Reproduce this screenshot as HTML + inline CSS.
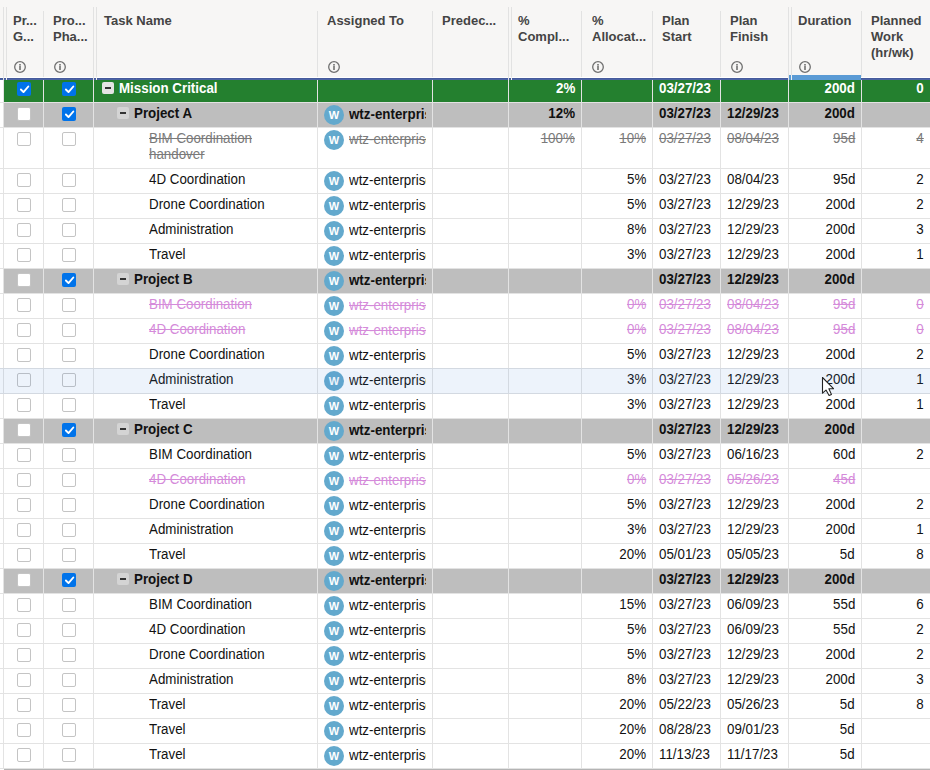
<!DOCTYPE html><html><head><meta charset="utf-8"><title>Sheet</title><style>

html,body{margin:0;padding:0;}
body{width:930px;height:770px;overflow:hidden;position:relative;background:#fff;font-family:"Liberation Sans",sans-serif;font-size:13.333px;color:#111;}
#hdr{position:absolute;left:0;top:0;width:930px;height:77px;background:#f7f6f5;border-bottom:1px solid #fff;}
.hl{position:absolute;width:1px;background:#e2e2e2;}
.ht{position:absolute;top:13px;font-weight:bold;font-size:13px;line-height:16px;color:#444;white-space:nowrap;}
.info{position:absolute;top:61px;width:12px;height:12px;}
#blue{position:absolute;left:0;top:78px;width:930px;height:1px;background:#465b9c;border-bottom:1px solid #4c64a4;}
#colsel{position:absolute;left:789px;top:75px;width:72px;height:5px;background:#5b9bd5;}
.row{position:absolute;left:4px;width:926px;}
.c{position:absolute;top:0;height:100%;box-sizing:border-box;overflow:hidden;white-space:nowrap;line-height:16px;padding-top:4px;font-size:14px;}
.r{text-align:right;padding-right:6px;}
.l{text-align:left;padding-left:6px;}
.vl{position:absolute;top:80px;width:1px;height:689px;background:#e3e3e3;}
.hln{position:absolute;left:0;width:930px;height:1px;background:#e3e3e3;}
.cb{position:absolute;width:14px;height:14px;box-sizing:border-box;border:1px solid #c6c6c6;border-radius:2px;background:#fff;}
.cb.on{border:none;background:#0073ea;}
.cb svg{position:absolute;left:0;top:0;}
.ex{position:absolute;width:12px;height:12px;border-radius:2px;background:#e0e0e0;}
.ex i{position:absolute;left:3px;top:5px;width:6px;height:2px;background:#333;}
.av{position:absolute;left:324px;width:20px;height:20px;border-radius:10px;background:#63a9cd;color:#fff;font-weight:bold;font-size:11px;line-height:20px;text-align:center;}
.as{position:absolute;left:349px;width:76px;overflow:hidden;white-space:nowrap;line-height:16px;font-size:14px;}
.sx{display:inline-block;transform:scaleX(0.9524);transform-origin:0 0;text-decoration:inherit;}
.r .sx{transform-origin:100% 0;}
.b{font-weight:bold;}
.s{text-decoration:line-through;}

</style></head><body>
<div id="hdr"></div>
<div class="hl" style="left:3px;top:7px;height:70px"></div>
<div class="hl" style="left:6px;top:7px;height:70px"></div>
<div class="hl" style="left:43px;top:11px;height:66px"></div>
<div class="hl" style="left:93px;top:7px;height:70px"></div>
<div class="hl" style="left:96px;top:7px;height:70px"></div>
<div class="hl" style="left:317px;top:11px;height:66px"></div>
<div class="hl" style="left:432px;top:11px;height:66px"></div>
<div class="hl" style="left:508px;top:7px;height:70px"></div>
<div class="hl" style="left:511px;top:7px;height:70px"></div>
<div class="hl" style="left:581px;top:11px;height:66px"></div>
<div class="hl" style="left:652px;top:11px;height:66px"></div>
<div class="hl" style="left:720px;top:11px;height:66px"></div>
<div class="hl" style="left:788px;top:7px;height:70px"></div>
<div class="hl" style="left:791px;top:7px;height:70px"></div>
<div class="hl" style="left:861px;top:11px;height:66px"></div>
<div class="ht" style="left:13px">Pr...<br>G...</div>
<svg class="info" style="left:14px" viewBox="0 0 12 12"><circle cx="6" cy="6" r="5.3" fill="none" stroke="#707070" stroke-width="1.3"/><rect x="5.2" y="3" width="1.6" height="1.5" fill="#707070"/><rect x="5.2" y="4.8" width="1.6" height="4.2" fill="#707070"/></svg>
<div class="ht" style="left:53px">Pro...<br>Pha...</div>
<svg class="info" style="left:54px" viewBox="0 0 12 12"><circle cx="6" cy="6" r="5.3" fill="none" stroke="#707070" stroke-width="1.3"/><rect x="5.2" y="3" width="1.6" height="1.5" fill="#707070"/><rect x="5.2" y="4.8" width="1.6" height="4.2" fill="#707070"/></svg>
<div class="ht" style="left:104px">Task Name</div>
<div class="ht" style="left:327px">Assigned To</div>
<svg class="info" style="left:328px" viewBox="0 0 12 12"><circle cx="6" cy="6" r="5.3" fill="none" stroke="#707070" stroke-width="1.3"/><rect x="5.2" y="3" width="1.6" height="1.5" fill="#707070"/><rect x="5.2" y="4.8" width="1.6" height="4.2" fill="#707070"/></svg>
<div class="ht" style="left:442px">Predec...</div>
<div class="ht" style="left:518px">%<br>Compl...</div>
<div class="ht" style="left:592px">%<br>Allocat...</div>
<svg class="info" style="left:592px" viewBox="0 0 12 12"><circle cx="6" cy="6" r="5.3" fill="none" stroke="#707070" stroke-width="1.3"/><rect x="5.2" y="3" width="1.6" height="1.5" fill="#707070"/><rect x="5.2" y="4.8" width="1.6" height="4.2" fill="#707070"/></svg>
<div class="ht" style="left:662px">Plan<br>Start</div>
<div class="ht" style="left:730px">Plan<br>Finish</div>
<svg class="info" style="left:731px" viewBox="0 0 12 12"><circle cx="6" cy="6" r="5.3" fill="none" stroke="#707070" stroke-width="1.3"/><rect x="5.2" y="3" width="1.6" height="1.5" fill="#707070"/><rect x="5.2" y="4.8" width="1.6" height="4.2" fill="#707070"/></svg>
<div class="ht" style="left:798px">Duration</div>
<svg class="info" style="left:799px" viewBox="0 0 12 12"><circle cx="6" cy="6" r="5.3" fill="none" stroke="#707070" stroke-width="1.3"/><rect x="5.2" y="3" width="1.6" height="1.5" fill="#707070"/><rect x="5.2" y="4.8" width="1.6" height="4.2" fill="#707070"/></svg>
<div class="ht" style="left:871px">Planned<br>Work<br>(hr/wk)</div>
<div id="blue"></div><div id="colsel"></div>
<div class="row b" style="top:80px;height:22px;background:#24802f;color:#fff">
</div>
<div class="row b" style="top:103px;height:24px;background:#bebebe;color:#111">
</div>
<div class="row s" style="top:128px;height:40px;background:#fff;color:#7a7a7a">
</div>
<div class="row" style="top:169px;height:24px;background:#fff;color:#111">
</div>
<div class="row" style="top:194px;height:24px;background:#fff;color:#111">
</div>
<div class="row" style="top:219px;height:24px;background:#fff;color:#111">
</div>
<div class="row" style="top:244px;height:24px;background:#fff;color:#111">
</div>
<div class="row b" style="top:269px;height:24px;background:#bebebe;color:#111">
</div>
<div class="row s" style="top:294px;height:24px;background:#fff;color:#d58bda">
</div>
<div class="row s" style="top:319px;height:24px;background:#fff;color:#d58bda">
</div>
<div class="row" style="top:344px;height:24px;background:#fff;color:#111">
</div>
<div class="row" style="top:369px;height:24px;background:#fff;color:#111">
</div>
<div class="row" style="top:394px;height:24px;background:#fff;color:#111">
</div>
<div class="row b" style="top:419px;height:24px;background:#bebebe;color:#111">
</div>
<div class="row" style="top:444px;height:24px;background:#fff;color:#111">
</div>
<div class="row s" style="top:469px;height:24px;background:#fff;color:#d58bda">
</div>
<div class="row" style="top:494px;height:24px;background:#fff;color:#111">
</div>
<div class="row" style="top:519px;height:24px;background:#fff;color:#111">
</div>
<div class="row" style="top:544px;height:24px;background:#fff;color:#111">
</div>
<div class="row b" style="top:569px;height:24px;background:#bebebe;color:#111">
</div>
<div class="row" style="top:594px;height:24px;background:#fff;color:#111">
</div>
<div class="row" style="top:619px;height:24px;background:#fff;color:#111">
</div>
<div class="row" style="top:644px;height:24px;background:#fff;color:#111">
</div>
<div class="row" style="top:669px;height:24px;background:#fff;color:#111">
</div>
<div class="row" style="top:694px;height:24px;background:#fff;color:#111">
</div>
<div class="row" style="top:719px;height:24px;background:#fff;color:#111">
</div>
<div class="row" style="top:744px;height:24px;background:#fff;color:#111">
</div>
<div class="cb on" style="left:17px;top:82px"><svg width="14" height="14" viewBox="0 0 14 14"><path d="M3.9 7.5 L6.5 10.1 L11.3 4.5" fill="none" stroke="#fff" stroke-width="1.9" stroke-linecap="round" stroke-linejoin="round"/></svg></div>
<div class="cb on" style="left:62px;top:82px"><svg width="14" height="14" viewBox="0 0 14 14"><path d="M3.9 7.5 L6.5 10.1 L11.3 4.5" fill="none" stroke="#fff" stroke-width="1.9" stroke-linecap="round" stroke-linejoin="round"/></svg></div>
<div class="ex" style="left:102px;top:82px;background:#e4e4e4"><i></i></div>
<div class="c  b" style="left:119px;width:198px;top:80px;height:22px;color:#fff;padding-top:0px;"><span class="sx">Mission Critical</span></div>
<div class="c r b" style="left:509px;width:72px;top:80px;height:22px;color:#fff;padding-top:0px;"><span class="sx">2%</span></div>
<div class="c r b" style="left:582px;width:70px;top:80px;height:22px;color:#fff;padding-top:0px;"><span class="sx"></span></div>
<div class="c l b" style="left:653px;width:67px;top:80px;height:22px;color:#fff;padding-top:0px;"><span class="sx">03/27/23</span></div>
<div class="c l b" style="left:721px;width:67px;top:80px;height:22px;color:#fff;padding-top:0px;"><span class="sx"></span></div>
<div class="c r b" style="left:789px;width:72px;top:80px;height:22px;color:#fff;padding-top:0px;"><span class="sx">200d</span></div>
<div class="c r b" style="left:862px;width:68px;top:80px;height:22px;color:#fff;padding-top:0px;"><span class="sx">0</span></div>
<div class="cb" style="left:17px;top:107px;border-color:#c4c4c4"></div>
<div class="cb on" style="left:62px;top:107px"><svg width="14" height="14" viewBox="0 0 14 14"><path d="M3.9 7.5 L6.5 10.1 L11.3 4.5" fill="none" stroke="#fff" stroke-width="1.9" stroke-linecap="round" stroke-linejoin="round"/></svg></div>
<div class="ex" style="left:117px;top:107px;background:#d4d4d4"><i></i></div>
<div class="c  b" style="left:134px;width:183px;top:103px;height:24px;color:#111;padding-top:2px;"><span class="sx">Project A</span></div>
<div class="av" style="top:105px">W</div>
<div class="as b" style="top:106px;color:#111;width:77px"><span class="sx">wtz-enterprise</span></div>
<div class="c r b" style="left:509px;width:72px;top:103px;height:24px;color:#111;padding-top:2px;"><span class="sx">12%</span></div>
<div class="c r b" style="left:582px;width:70px;top:103px;height:24px;color:#111;padding-top:2px;"><span class="sx"></span></div>
<div class="c l b" style="left:653px;width:67px;top:103px;height:24px;color:#111;padding-top:2px;"><span class="sx">03/27/23</span></div>
<div class="c l b" style="left:721px;width:67px;top:103px;height:24px;color:#111;padding-top:2px;"><span class="sx">12/29/23</span></div>
<div class="c r b" style="left:789px;width:72px;top:103px;height:24px;color:#111;padding-top:2px;"><span class="sx">200d</span></div>
<div class="c r b" style="left:862px;width:68px;top:103px;height:24px;color:#111;padding-top:2px;"><span class="sx"></span></div>
<div class="cb" style="left:17px;top:132px;border-color:#c4c4c4"></div>
<div class="cb" style="left:62px;top:132px;border-color:#c4c4c4"></div>
<div class="c  s" style="left:149px;width:168px;top:128px;height:40px;color:#7a7a7a;padding-top:2px;"><span class="sx">BIM Coordination<br>handover</span></div>
<div class="av" style="top:130px">W</div>
<div class="as s" style="top:131px;color:#7a7a7a;width:77px"><span class="sx">wtz-enterprise</span></div>
<div class="c r s" style="left:509px;width:72px;top:128px;height:40px;color:#7a7a7a;padding-top:2px;"><span class="sx">100%</span></div>
<div class="c r s" style="left:582px;width:70px;top:128px;height:40px;color:#7a7a7a;padding-top:2px;"><span class="sx">10%</span></div>
<div class="c l s" style="left:653px;width:67px;top:128px;height:40px;color:#7a7a7a;padding-top:2px;"><span class="sx">03/27/23</span></div>
<div class="c l s" style="left:721px;width:67px;top:128px;height:40px;color:#7a7a7a;padding-top:2px;"><span class="sx">08/04/23</span></div>
<div class="c r s" style="left:789px;width:72px;top:128px;height:40px;color:#7a7a7a;padding-top:2px;"><span class="sx">95d</span></div>
<div class="c r s" style="left:862px;width:68px;top:128px;height:40px;color:#7a7a7a;padding-top:2px;"><span class="sx">4</span></div>
<div class="cb" style="left:17px;top:173px;border-color:#c4c4c4"></div>
<div class="cb" style="left:62px;top:173px;border-color:#c4c4c4"></div>
<div class="c " style="left:149px;width:168px;top:169px;height:24px;color:#111;padding-top:2px;"><span class="sx">4D Coordination</span></div>
<div class="av" style="top:171px">W</div>
<div class="as" style="top:172px;color:#111;width:77px"><span class="sx">wtz-enterprise</span></div>
<div class="c r" style="left:509px;width:72px;top:169px;height:24px;color:#111;padding-top:2px;"><span class="sx"></span></div>
<div class="c r" style="left:582px;width:70px;top:169px;height:24px;color:#111;padding-top:2px;"><span class="sx">5%</span></div>
<div class="c l" style="left:653px;width:67px;top:169px;height:24px;color:#111;padding-top:2px;"><span class="sx">03/27/23</span></div>
<div class="c l" style="left:721px;width:67px;top:169px;height:24px;color:#111;padding-top:2px;"><span class="sx">08/04/23</span></div>
<div class="c r" style="left:789px;width:72px;top:169px;height:24px;color:#111;padding-top:2px;"><span class="sx">95d</span></div>
<div class="c r" style="left:862px;width:68px;top:169px;height:24px;color:#111;padding-top:2px;"><span class="sx">2</span></div>
<div class="cb" style="left:17px;top:198px;border-color:#c4c4c4"></div>
<div class="cb" style="left:62px;top:198px;border-color:#c4c4c4"></div>
<div class="c " style="left:149px;width:168px;top:194px;height:24px;color:#111;padding-top:2px;"><span class="sx">Drone Coordination</span></div>
<div class="av" style="top:196px">W</div>
<div class="as" style="top:197px;color:#111;width:77px"><span class="sx">wtz-enterprise</span></div>
<div class="c r" style="left:509px;width:72px;top:194px;height:24px;color:#111;padding-top:2px;"><span class="sx"></span></div>
<div class="c r" style="left:582px;width:70px;top:194px;height:24px;color:#111;padding-top:2px;"><span class="sx">5%</span></div>
<div class="c l" style="left:653px;width:67px;top:194px;height:24px;color:#111;padding-top:2px;"><span class="sx">03/27/23</span></div>
<div class="c l" style="left:721px;width:67px;top:194px;height:24px;color:#111;padding-top:2px;"><span class="sx">12/29/23</span></div>
<div class="c r" style="left:789px;width:72px;top:194px;height:24px;color:#111;padding-top:2px;"><span class="sx">200d</span></div>
<div class="c r" style="left:862px;width:68px;top:194px;height:24px;color:#111;padding-top:2px;"><span class="sx">2</span></div>
<div class="cb" style="left:17px;top:223px;border-color:#c4c4c4"></div>
<div class="cb" style="left:62px;top:223px;border-color:#c4c4c4"></div>
<div class="c " style="left:149px;width:168px;top:219px;height:24px;color:#111;padding-top:2px;"><span class="sx">Administration</span></div>
<div class="av" style="top:221px">W</div>
<div class="as" style="top:222px;color:#111;width:77px"><span class="sx">wtz-enterprise</span></div>
<div class="c r" style="left:509px;width:72px;top:219px;height:24px;color:#111;padding-top:2px;"><span class="sx"></span></div>
<div class="c r" style="left:582px;width:70px;top:219px;height:24px;color:#111;padding-top:2px;"><span class="sx">8%</span></div>
<div class="c l" style="left:653px;width:67px;top:219px;height:24px;color:#111;padding-top:2px;"><span class="sx">03/27/23</span></div>
<div class="c l" style="left:721px;width:67px;top:219px;height:24px;color:#111;padding-top:2px;"><span class="sx">12/29/23</span></div>
<div class="c r" style="left:789px;width:72px;top:219px;height:24px;color:#111;padding-top:2px;"><span class="sx">200d</span></div>
<div class="c r" style="left:862px;width:68px;top:219px;height:24px;color:#111;padding-top:2px;"><span class="sx">3</span></div>
<div class="cb" style="left:17px;top:248px;border-color:#c4c4c4"></div>
<div class="cb" style="left:62px;top:248px;border-color:#c4c4c4"></div>
<div class="c " style="left:149px;width:168px;top:244px;height:24px;color:#111;padding-top:2px;"><span class="sx">Travel</span></div>
<div class="av" style="top:246px">W</div>
<div class="as" style="top:247px;color:#111;width:77px"><span class="sx">wtz-enterprise</span></div>
<div class="c r" style="left:509px;width:72px;top:244px;height:24px;color:#111;padding-top:2px;"><span class="sx"></span></div>
<div class="c r" style="left:582px;width:70px;top:244px;height:24px;color:#111;padding-top:2px;"><span class="sx">3%</span></div>
<div class="c l" style="left:653px;width:67px;top:244px;height:24px;color:#111;padding-top:2px;"><span class="sx">03/27/23</span></div>
<div class="c l" style="left:721px;width:67px;top:244px;height:24px;color:#111;padding-top:2px;"><span class="sx">12/29/23</span></div>
<div class="c r" style="left:789px;width:72px;top:244px;height:24px;color:#111;padding-top:2px;"><span class="sx">200d</span></div>
<div class="c r" style="left:862px;width:68px;top:244px;height:24px;color:#111;padding-top:2px;"><span class="sx">1</span></div>
<div class="cb" style="left:17px;top:273px;border-color:#c4c4c4"></div>
<div class="cb on" style="left:62px;top:273px"><svg width="14" height="14" viewBox="0 0 14 14"><path d="M3.9 7.5 L6.5 10.1 L11.3 4.5" fill="none" stroke="#fff" stroke-width="1.9" stroke-linecap="round" stroke-linejoin="round"/></svg></div>
<div class="ex" style="left:117px;top:273px;background:#d4d4d4"><i></i></div>
<div class="c  b" style="left:134px;width:183px;top:269px;height:24px;color:#111;padding-top:2px;"><span class="sx">Project B</span></div>
<div class="av" style="top:271px">W</div>
<div class="as b" style="top:272px;color:#111;width:77px"><span class="sx">wtz-enterprise</span></div>
<div class="c r b" style="left:509px;width:72px;top:269px;height:24px;color:#111;padding-top:2px;"><span class="sx"></span></div>
<div class="c r b" style="left:582px;width:70px;top:269px;height:24px;color:#111;padding-top:2px;"><span class="sx"></span></div>
<div class="c l b" style="left:653px;width:67px;top:269px;height:24px;color:#111;padding-top:2px;"><span class="sx">03/27/23</span></div>
<div class="c l b" style="left:721px;width:67px;top:269px;height:24px;color:#111;padding-top:2px;"><span class="sx">12/29/23</span></div>
<div class="c r b" style="left:789px;width:72px;top:269px;height:24px;color:#111;padding-top:2px;"><span class="sx">200d</span></div>
<div class="c r b" style="left:862px;width:68px;top:269px;height:24px;color:#111;padding-top:2px;"><span class="sx"></span></div>
<div class="cb" style="left:17px;top:298px;border-color:#c4c4c4"></div>
<div class="cb" style="left:62px;top:298px;border-color:#c4c4c4"></div>
<div class="c  s" style="left:149px;width:168px;top:294px;height:24px;color:#d58bda;padding-top:2px;"><span class="sx">BIM Coordination</span></div>
<div class="av" style="top:296px">W</div>
<div class="as s" style="top:297px;color:#d58bda;width:77px"><span class="sx">wtz-enterprise</span></div>
<div class="c r s" style="left:509px;width:72px;top:294px;height:24px;color:#d58bda;padding-top:2px;"><span class="sx"></span></div>
<div class="c r s" style="left:582px;width:70px;top:294px;height:24px;color:#d58bda;padding-top:2px;"><span class="sx">0%</span></div>
<div class="c l s" style="left:653px;width:67px;top:294px;height:24px;color:#d58bda;padding-top:2px;"><span class="sx">03/27/23</span></div>
<div class="c l s" style="left:721px;width:67px;top:294px;height:24px;color:#d58bda;padding-top:2px;"><span class="sx">08/04/23</span></div>
<div class="c r s" style="left:789px;width:72px;top:294px;height:24px;color:#d58bda;padding-top:2px;"><span class="sx">95d</span></div>
<div class="c r s" style="left:862px;width:68px;top:294px;height:24px;color:#d58bda;padding-top:2px;"><span class="sx">0</span></div>
<div class="cb" style="left:17px;top:323px;border-color:#c4c4c4"></div>
<div class="cb" style="left:62px;top:323px;border-color:#c4c4c4"></div>
<div class="c  s" style="left:149px;width:168px;top:319px;height:24px;color:#d58bda;padding-top:2px;"><span class="sx">4D Coordination</span></div>
<div class="av" style="top:321px">W</div>
<div class="as s" style="top:322px;color:#d58bda;width:77px"><span class="sx">wtz-enterprise</span></div>
<div class="c r s" style="left:509px;width:72px;top:319px;height:24px;color:#d58bda;padding-top:2px;"><span class="sx"></span></div>
<div class="c r s" style="left:582px;width:70px;top:319px;height:24px;color:#d58bda;padding-top:2px;"><span class="sx">0%</span></div>
<div class="c l s" style="left:653px;width:67px;top:319px;height:24px;color:#d58bda;padding-top:2px;"><span class="sx">03/27/23</span></div>
<div class="c l s" style="left:721px;width:67px;top:319px;height:24px;color:#d58bda;padding-top:2px;"><span class="sx">08/04/23</span></div>
<div class="c r s" style="left:789px;width:72px;top:319px;height:24px;color:#d58bda;padding-top:2px;"><span class="sx">95d</span></div>
<div class="c r s" style="left:862px;width:68px;top:319px;height:24px;color:#d58bda;padding-top:2px;"><span class="sx">0</span></div>
<div class="cb" style="left:17px;top:348px;border-color:#c4c4c4"></div>
<div class="cb" style="left:62px;top:348px;border-color:#c4c4c4"></div>
<div class="c " style="left:149px;width:168px;top:344px;height:24px;color:#111;padding-top:2px;"><span class="sx">Drone Coordination</span></div>
<div class="av" style="top:346px">W</div>
<div class="as" style="top:347px;color:#111;width:77px"><span class="sx">wtz-enterprise</span></div>
<div class="c r" style="left:509px;width:72px;top:344px;height:24px;color:#111;padding-top:2px;"><span class="sx"></span></div>
<div class="c r" style="left:582px;width:70px;top:344px;height:24px;color:#111;padding-top:2px;"><span class="sx">5%</span></div>
<div class="c l" style="left:653px;width:67px;top:344px;height:24px;color:#111;padding-top:2px;"><span class="sx">03/27/23</span></div>
<div class="c l" style="left:721px;width:67px;top:344px;height:24px;color:#111;padding-top:2px;"><span class="sx">12/29/23</span></div>
<div class="c r" style="left:789px;width:72px;top:344px;height:24px;color:#111;padding-top:2px;"><span class="sx">200d</span></div>
<div class="c r" style="left:862px;width:68px;top:344px;height:24px;color:#111;padding-top:2px;"><span class="sx">2</span></div>
<div class="cb" style="left:17px;top:373px;border-color:#c4c4c4"></div>
<div class="cb" style="left:62px;top:373px;border-color:#c4c4c4"></div>
<div class="c " style="left:149px;width:168px;top:369px;height:24px;color:#111;padding-top:2px;"><span class="sx">Administration</span></div>
<div class="av" style="top:371px">W</div>
<div class="as" style="top:372px;color:#111;width:77px"><span class="sx">wtz-enterprise</span></div>
<div class="c r" style="left:509px;width:72px;top:369px;height:24px;color:#111;padding-top:2px;"><span class="sx"></span></div>
<div class="c r" style="left:582px;width:70px;top:369px;height:24px;color:#111;padding-top:2px;"><span class="sx">3%</span></div>
<div class="c l" style="left:653px;width:67px;top:369px;height:24px;color:#111;padding-top:2px;"><span class="sx">03/27/23</span></div>
<div class="c l" style="left:721px;width:67px;top:369px;height:24px;color:#111;padding-top:2px;"><span class="sx">12/29/23</span></div>
<div class="c r" style="left:789px;width:72px;top:369px;height:24px;color:#111;padding-top:2px;"><span class="sx">200d</span></div>
<div class="c r" style="left:862px;width:68px;top:369px;height:24px;color:#111;padding-top:2px;"><span class="sx">1</span></div>
<div class="cb" style="left:17px;top:398px;border-color:#c4c4c4"></div>
<div class="cb" style="left:62px;top:398px;border-color:#c4c4c4"></div>
<div class="c " style="left:149px;width:168px;top:394px;height:24px;color:#111;padding-top:2px;"><span class="sx">Travel</span></div>
<div class="av" style="top:396px">W</div>
<div class="as" style="top:397px;color:#111;width:77px"><span class="sx">wtz-enterprise</span></div>
<div class="c r" style="left:509px;width:72px;top:394px;height:24px;color:#111;padding-top:2px;"><span class="sx"></span></div>
<div class="c r" style="left:582px;width:70px;top:394px;height:24px;color:#111;padding-top:2px;"><span class="sx">3%</span></div>
<div class="c l" style="left:653px;width:67px;top:394px;height:24px;color:#111;padding-top:2px;"><span class="sx">03/27/23</span></div>
<div class="c l" style="left:721px;width:67px;top:394px;height:24px;color:#111;padding-top:2px;"><span class="sx">12/29/23</span></div>
<div class="c r" style="left:789px;width:72px;top:394px;height:24px;color:#111;padding-top:2px;"><span class="sx">200d</span></div>
<div class="c r" style="left:862px;width:68px;top:394px;height:24px;color:#111;padding-top:2px;"><span class="sx">1</span></div>
<div class="cb" style="left:17px;top:423px;border-color:#c4c4c4"></div>
<div class="cb on" style="left:62px;top:423px"><svg width="14" height="14" viewBox="0 0 14 14"><path d="M3.9 7.5 L6.5 10.1 L11.3 4.5" fill="none" stroke="#fff" stroke-width="1.9" stroke-linecap="round" stroke-linejoin="round"/></svg></div>
<div class="ex" style="left:117px;top:423px;background:#d4d4d4"><i></i></div>
<div class="c  b" style="left:134px;width:183px;top:419px;height:24px;color:#111;padding-top:2px;"><span class="sx">Project C</span></div>
<div class="av" style="top:421px">W</div>
<div class="as b" style="top:422px;color:#111;width:77px"><span class="sx">wtz-enterprise</span></div>
<div class="c r b" style="left:509px;width:72px;top:419px;height:24px;color:#111;padding-top:2px;"><span class="sx"></span></div>
<div class="c r b" style="left:582px;width:70px;top:419px;height:24px;color:#111;padding-top:2px;"><span class="sx"></span></div>
<div class="c l b" style="left:653px;width:67px;top:419px;height:24px;color:#111;padding-top:2px;"><span class="sx">03/27/23</span></div>
<div class="c l b" style="left:721px;width:67px;top:419px;height:24px;color:#111;padding-top:2px;"><span class="sx">12/29/23</span></div>
<div class="c r b" style="left:789px;width:72px;top:419px;height:24px;color:#111;padding-top:2px;"><span class="sx">200d</span></div>
<div class="c r b" style="left:862px;width:68px;top:419px;height:24px;color:#111;padding-top:2px;"><span class="sx"></span></div>
<div class="cb" style="left:17px;top:448px;border-color:#c4c4c4"></div>
<div class="cb" style="left:62px;top:448px;border-color:#c4c4c4"></div>
<div class="c " style="left:149px;width:168px;top:444px;height:24px;color:#111;padding-top:2px;"><span class="sx">BIM Coordination</span></div>
<div class="av" style="top:446px">W</div>
<div class="as" style="top:447px;color:#111;width:77px"><span class="sx">wtz-enterprise</span></div>
<div class="c r" style="left:509px;width:72px;top:444px;height:24px;color:#111;padding-top:2px;"><span class="sx"></span></div>
<div class="c r" style="left:582px;width:70px;top:444px;height:24px;color:#111;padding-top:2px;"><span class="sx">5%</span></div>
<div class="c l" style="left:653px;width:67px;top:444px;height:24px;color:#111;padding-top:2px;"><span class="sx">03/27/23</span></div>
<div class="c l" style="left:721px;width:67px;top:444px;height:24px;color:#111;padding-top:2px;"><span class="sx">06/16/23</span></div>
<div class="c r" style="left:789px;width:72px;top:444px;height:24px;color:#111;padding-top:2px;"><span class="sx">60d</span></div>
<div class="c r" style="left:862px;width:68px;top:444px;height:24px;color:#111;padding-top:2px;"><span class="sx">2</span></div>
<div class="cb" style="left:17px;top:473px;border-color:#c4c4c4"></div>
<div class="cb" style="left:62px;top:473px;border-color:#c4c4c4"></div>
<div class="c  s" style="left:149px;width:168px;top:469px;height:24px;color:#d58bda;padding-top:2px;"><span class="sx">4D Coordination</span></div>
<div class="av" style="top:471px">W</div>
<div class="as s" style="top:472px;color:#d58bda;width:77px"><span class="sx">wtz-enterprise</span></div>
<div class="c r s" style="left:509px;width:72px;top:469px;height:24px;color:#d58bda;padding-top:2px;"><span class="sx"></span></div>
<div class="c r s" style="left:582px;width:70px;top:469px;height:24px;color:#d58bda;padding-top:2px;"><span class="sx">0%</span></div>
<div class="c l s" style="left:653px;width:67px;top:469px;height:24px;color:#d58bda;padding-top:2px;"><span class="sx">03/27/23</span></div>
<div class="c l s" style="left:721px;width:67px;top:469px;height:24px;color:#d58bda;padding-top:2px;"><span class="sx">05/26/23</span></div>
<div class="c r s" style="left:789px;width:72px;top:469px;height:24px;color:#d58bda;padding-top:2px;"><span class="sx">45d</span></div>
<div class="c r s" style="left:862px;width:68px;top:469px;height:24px;color:#d58bda;padding-top:2px;"><span class="sx"></span></div>
<div class="cb" style="left:17px;top:498px;border-color:#c4c4c4"></div>
<div class="cb" style="left:62px;top:498px;border-color:#c4c4c4"></div>
<div class="c " style="left:149px;width:168px;top:494px;height:24px;color:#111;padding-top:2px;"><span class="sx">Drone Coordination</span></div>
<div class="av" style="top:496px">W</div>
<div class="as" style="top:497px;color:#111;width:77px"><span class="sx">wtz-enterprise</span></div>
<div class="c r" style="left:509px;width:72px;top:494px;height:24px;color:#111;padding-top:2px;"><span class="sx"></span></div>
<div class="c r" style="left:582px;width:70px;top:494px;height:24px;color:#111;padding-top:2px;"><span class="sx">5%</span></div>
<div class="c l" style="left:653px;width:67px;top:494px;height:24px;color:#111;padding-top:2px;"><span class="sx">03/27/23</span></div>
<div class="c l" style="left:721px;width:67px;top:494px;height:24px;color:#111;padding-top:2px;"><span class="sx">12/29/23</span></div>
<div class="c r" style="left:789px;width:72px;top:494px;height:24px;color:#111;padding-top:2px;"><span class="sx">200d</span></div>
<div class="c r" style="left:862px;width:68px;top:494px;height:24px;color:#111;padding-top:2px;"><span class="sx">2</span></div>
<div class="cb" style="left:17px;top:523px;border-color:#c4c4c4"></div>
<div class="cb" style="left:62px;top:523px;border-color:#c4c4c4"></div>
<div class="c " style="left:149px;width:168px;top:519px;height:24px;color:#111;padding-top:2px;"><span class="sx">Administration</span></div>
<div class="av" style="top:521px">W</div>
<div class="as" style="top:522px;color:#111;width:77px"><span class="sx">wtz-enterprise</span></div>
<div class="c r" style="left:509px;width:72px;top:519px;height:24px;color:#111;padding-top:2px;"><span class="sx"></span></div>
<div class="c r" style="left:582px;width:70px;top:519px;height:24px;color:#111;padding-top:2px;"><span class="sx">3%</span></div>
<div class="c l" style="left:653px;width:67px;top:519px;height:24px;color:#111;padding-top:2px;"><span class="sx">03/27/23</span></div>
<div class="c l" style="left:721px;width:67px;top:519px;height:24px;color:#111;padding-top:2px;"><span class="sx">12/29/23</span></div>
<div class="c r" style="left:789px;width:72px;top:519px;height:24px;color:#111;padding-top:2px;"><span class="sx">200d</span></div>
<div class="c r" style="left:862px;width:68px;top:519px;height:24px;color:#111;padding-top:2px;"><span class="sx">1</span></div>
<div class="cb" style="left:17px;top:548px;border-color:#c4c4c4"></div>
<div class="cb" style="left:62px;top:548px;border-color:#c4c4c4"></div>
<div class="c " style="left:149px;width:168px;top:544px;height:24px;color:#111;padding-top:2px;"><span class="sx">Travel</span></div>
<div class="av" style="top:546px">W</div>
<div class="as" style="top:547px;color:#111;width:77px"><span class="sx">wtz-enterprise</span></div>
<div class="c r" style="left:509px;width:72px;top:544px;height:24px;color:#111;padding-top:2px;"><span class="sx"></span></div>
<div class="c r" style="left:582px;width:70px;top:544px;height:24px;color:#111;padding-top:2px;"><span class="sx">20%</span></div>
<div class="c l" style="left:653px;width:67px;top:544px;height:24px;color:#111;padding-top:2px;"><span class="sx">05/01/23</span></div>
<div class="c l" style="left:721px;width:67px;top:544px;height:24px;color:#111;padding-top:2px;"><span class="sx">05/05/23</span></div>
<div class="c r" style="left:789px;width:72px;top:544px;height:24px;color:#111;padding-top:2px;"><span class="sx">5d</span></div>
<div class="c r" style="left:862px;width:68px;top:544px;height:24px;color:#111;padding-top:2px;"><span class="sx">8</span></div>
<div class="cb" style="left:17px;top:573px;border-color:#c4c4c4"></div>
<div class="cb on" style="left:62px;top:573px"><svg width="14" height="14" viewBox="0 0 14 14"><path d="M3.9 7.5 L6.5 10.1 L11.3 4.5" fill="none" stroke="#fff" stroke-width="1.9" stroke-linecap="round" stroke-linejoin="round"/></svg></div>
<div class="ex" style="left:117px;top:573px;background:#d4d4d4"><i></i></div>
<div class="c  b" style="left:134px;width:183px;top:569px;height:24px;color:#111;padding-top:2px;"><span class="sx">Project D</span></div>
<div class="av" style="top:571px">W</div>
<div class="as b" style="top:572px;color:#111;width:77px"><span class="sx">wtz-enterprise</span></div>
<div class="c r b" style="left:509px;width:72px;top:569px;height:24px;color:#111;padding-top:2px;"><span class="sx"></span></div>
<div class="c r b" style="left:582px;width:70px;top:569px;height:24px;color:#111;padding-top:2px;"><span class="sx"></span></div>
<div class="c l b" style="left:653px;width:67px;top:569px;height:24px;color:#111;padding-top:2px;"><span class="sx">03/27/23</span></div>
<div class="c l b" style="left:721px;width:67px;top:569px;height:24px;color:#111;padding-top:2px;"><span class="sx">12/29/23</span></div>
<div class="c r b" style="left:789px;width:72px;top:569px;height:24px;color:#111;padding-top:2px;"><span class="sx">200d</span></div>
<div class="c r b" style="left:862px;width:68px;top:569px;height:24px;color:#111;padding-top:2px;"><span class="sx"></span></div>
<div class="cb" style="left:17px;top:598px;border-color:#c4c4c4"></div>
<div class="cb" style="left:62px;top:598px;border-color:#c4c4c4"></div>
<div class="c " style="left:149px;width:168px;top:594px;height:24px;color:#111;padding-top:2px;"><span class="sx">BIM Coordination</span></div>
<div class="av" style="top:596px">W</div>
<div class="as" style="top:597px;color:#111;width:77px"><span class="sx">wtz-enterprise</span></div>
<div class="c r" style="left:509px;width:72px;top:594px;height:24px;color:#111;padding-top:2px;"><span class="sx"></span></div>
<div class="c r" style="left:582px;width:70px;top:594px;height:24px;color:#111;padding-top:2px;"><span class="sx">15%</span></div>
<div class="c l" style="left:653px;width:67px;top:594px;height:24px;color:#111;padding-top:2px;"><span class="sx">03/27/23</span></div>
<div class="c l" style="left:721px;width:67px;top:594px;height:24px;color:#111;padding-top:2px;"><span class="sx">06/09/23</span></div>
<div class="c r" style="left:789px;width:72px;top:594px;height:24px;color:#111;padding-top:2px;"><span class="sx">55d</span></div>
<div class="c r" style="left:862px;width:68px;top:594px;height:24px;color:#111;padding-top:2px;"><span class="sx">6</span></div>
<div class="cb" style="left:17px;top:623px;border-color:#c4c4c4"></div>
<div class="cb" style="left:62px;top:623px;border-color:#c4c4c4"></div>
<div class="c " style="left:149px;width:168px;top:619px;height:24px;color:#111;padding-top:2px;"><span class="sx">4D Coordination</span></div>
<div class="av" style="top:621px">W</div>
<div class="as" style="top:622px;color:#111;width:77px"><span class="sx">wtz-enterprise</span></div>
<div class="c r" style="left:509px;width:72px;top:619px;height:24px;color:#111;padding-top:2px;"><span class="sx"></span></div>
<div class="c r" style="left:582px;width:70px;top:619px;height:24px;color:#111;padding-top:2px;"><span class="sx">5%</span></div>
<div class="c l" style="left:653px;width:67px;top:619px;height:24px;color:#111;padding-top:2px;"><span class="sx">03/27/23</span></div>
<div class="c l" style="left:721px;width:67px;top:619px;height:24px;color:#111;padding-top:2px;"><span class="sx">06/09/23</span></div>
<div class="c r" style="left:789px;width:72px;top:619px;height:24px;color:#111;padding-top:2px;"><span class="sx">55d</span></div>
<div class="c r" style="left:862px;width:68px;top:619px;height:24px;color:#111;padding-top:2px;"><span class="sx">2</span></div>
<div class="cb" style="left:17px;top:648px;border-color:#c4c4c4"></div>
<div class="cb" style="left:62px;top:648px;border-color:#c4c4c4"></div>
<div class="c " style="left:149px;width:168px;top:644px;height:24px;color:#111;padding-top:2px;"><span class="sx">Drone Coordination</span></div>
<div class="av" style="top:646px">W</div>
<div class="as" style="top:647px;color:#111;width:77px"><span class="sx">wtz-enterprise</span></div>
<div class="c r" style="left:509px;width:72px;top:644px;height:24px;color:#111;padding-top:2px;"><span class="sx"></span></div>
<div class="c r" style="left:582px;width:70px;top:644px;height:24px;color:#111;padding-top:2px;"><span class="sx">5%</span></div>
<div class="c l" style="left:653px;width:67px;top:644px;height:24px;color:#111;padding-top:2px;"><span class="sx">03/27/23</span></div>
<div class="c l" style="left:721px;width:67px;top:644px;height:24px;color:#111;padding-top:2px;"><span class="sx">12/29/23</span></div>
<div class="c r" style="left:789px;width:72px;top:644px;height:24px;color:#111;padding-top:2px;"><span class="sx">200d</span></div>
<div class="c r" style="left:862px;width:68px;top:644px;height:24px;color:#111;padding-top:2px;"><span class="sx">2</span></div>
<div class="cb" style="left:17px;top:673px;border-color:#c4c4c4"></div>
<div class="cb" style="left:62px;top:673px;border-color:#c4c4c4"></div>
<div class="c " style="left:149px;width:168px;top:669px;height:24px;color:#111;padding-top:2px;"><span class="sx">Administration</span></div>
<div class="av" style="top:671px">W</div>
<div class="as" style="top:672px;color:#111;width:77px"><span class="sx">wtz-enterprise</span></div>
<div class="c r" style="left:509px;width:72px;top:669px;height:24px;color:#111;padding-top:2px;"><span class="sx"></span></div>
<div class="c r" style="left:582px;width:70px;top:669px;height:24px;color:#111;padding-top:2px;"><span class="sx">8%</span></div>
<div class="c l" style="left:653px;width:67px;top:669px;height:24px;color:#111;padding-top:2px;"><span class="sx">03/27/23</span></div>
<div class="c l" style="left:721px;width:67px;top:669px;height:24px;color:#111;padding-top:2px;"><span class="sx">12/29/23</span></div>
<div class="c r" style="left:789px;width:72px;top:669px;height:24px;color:#111;padding-top:2px;"><span class="sx">200d</span></div>
<div class="c r" style="left:862px;width:68px;top:669px;height:24px;color:#111;padding-top:2px;"><span class="sx">3</span></div>
<div class="cb" style="left:17px;top:698px;border-color:#c4c4c4"></div>
<div class="cb" style="left:62px;top:698px;border-color:#c4c4c4"></div>
<div class="c " style="left:149px;width:168px;top:694px;height:24px;color:#111;padding-top:2px;"><span class="sx">Travel</span></div>
<div class="av" style="top:696px">W</div>
<div class="as" style="top:697px;color:#111;width:77px"><span class="sx">wtz-enterprise</span></div>
<div class="c r" style="left:509px;width:72px;top:694px;height:24px;color:#111;padding-top:2px;"><span class="sx"></span></div>
<div class="c r" style="left:582px;width:70px;top:694px;height:24px;color:#111;padding-top:2px;"><span class="sx">20%</span></div>
<div class="c l" style="left:653px;width:67px;top:694px;height:24px;color:#111;padding-top:2px;"><span class="sx">05/22/23</span></div>
<div class="c l" style="left:721px;width:67px;top:694px;height:24px;color:#111;padding-top:2px;"><span class="sx">05/26/23</span></div>
<div class="c r" style="left:789px;width:72px;top:694px;height:24px;color:#111;padding-top:2px;"><span class="sx">5d</span></div>
<div class="c r" style="left:862px;width:68px;top:694px;height:24px;color:#111;padding-top:2px;"><span class="sx">8</span></div>
<div class="cb" style="left:17px;top:723px;border-color:#c4c4c4"></div>
<div class="cb" style="left:62px;top:723px;border-color:#c4c4c4"></div>
<div class="c " style="left:149px;width:168px;top:719px;height:24px;color:#111;padding-top:2px;"><span class="sx">Travel</span></div>
<div class="av" style="top:721px">W</div>
<div class="as" style="top:722px;color:#111;width:77px"><span class="sx">wtz-enterprise</span></div>
<div class="c r" style="left:509px;width:72px;top:719px;height:24px;color:#111;padding-top:2px;"><span class="sx"></span></div>
<div class="c r" style="left:582px;width:70px;top:719px;height:24px;color:#111;padding-top:2px;"><span class="sx">20%</span></div>
<div class="c l" style="left:653px;width:67px;top:719px;height:24px;color:#111;padding-top:2px;"><span class="sx">08/28/23</span></div>
<div class="c l" style="left:721px;width:67px;top:719px;height:24px;color:#111;padding-top:2px;"><span class="sx">09/01/23</span></div>
<div class="c r" style="left:789px;width:72px;top:719px;height:24px;color:#111;padding-top:2px;"><span class="sx">5d</span></div>
<div class="c r" style="left:862px;width:68px;top:719px;height:24px;color:#111;padding-top:2px;"><span class="sx"></span></div>
<div class="cb" style="left:17px;top:748px;border-color:#c4c4c4"></div>
<div class="cb" style="left:62px;top:748px;border-color:#c4c4c4"></div>
<div class="c " style="left:149px;width:168px;top:744px;height:24px;color:#111;padding-top:2px;"><span class="sx">Travel</span></div>
<div class="av" style="top:746px">W</div>
<div class="as" style="top:747px;color:#111;width:77px"><span class="sx">wtz-enterprise</span></div>
<div class="c r" style="left:509px;width:72px;top:744px;height:24px;color:#111;padding-top:2px;"><span class="sx"></span></div>
<div class="c r" style="left:582px;width:70px;top:744px;height:24px;color:#111;padding-top:2px;"><span class="sx">20%</span></div>
<div class="c l" style="left:653px;width:67px;top:744px;height:24px;color:#111;padding-top:2px;"><span class="sx">11/13/23</span></div>
<div class="c l" style="left:721px;width:67px;top:744px;height:24px;color:#111;padding-top:2px;"><span class="sx">11/17/23</span></div>
<div class="c r" style="left:789px;width:72px;top:744px;height:24px;color:#111;padding-top:2px;"><span class="sx">5d</span></div>
<div class="c r" style="left:862px;width:68px;top:744px;height:24px;color:#111;padding-top:2px;"><span class="sx"></span></div>
<div class="hln" style="top:102px"></div>
<div class="hln" style="top:127px"></div>
<div class="hln" style="top:168px"></div>
<div class="hln" style="top:193px"></div>
<div class="hln" style="top:218px"></div>
<div class="hln" style="top:243px"></div>
<div class="hln" style="top:268px"></div>
<div class="hln" style="top:293px"></div>
<div class="hln" style="top:318px"></div>
<div class="hln" style="top:343px"></div>
<div class="hln" style="top:368px"></div>
<div class="hln" style="top:393px"></div>
<div class="hln" style="top:418px"></div>
<div class="hln" style="top:443px"></div>
<div class="hln" style="top:468px"></div>
<div class="hln" style="top:493px"></div>
<div class="hln" style="top:518px"></div>
<div class="hln" style="top:543px"></div>
<div class="hln" style="top:568px"></div>
<div class="hln" style="top:593px"></div>
<div class="hln" style="top:618px"></div>
<div class="hln" style="top:643px"></div>
<div class="hln" style="top:668px"></div>
<div class="hln" style="top:693px"></div>
<div class="hln" style="top:718px"></div>
<div class="hln" style="top:743px"></div>
<div class="hln" style="top:768px"></div>
<div class="hln" style="top:769px;left:4px;width:926px;background:#b4b4b4"></div>
<div class="vl" style="left:3px;top:77px;height:692px"></div>
<div class="vl" style="left:6px;top:77px;height:3px;background:#f2f2f2"></div>
<div class="vl" style="left:43px"></div>
<div class="vl" style="left:93px;top:77px;height:692px"></div>
<div class="vl" style="left:96px;top:77px;height:3px;background:#f2f2f2"></div>
<div class="vl" style="left:317px"></div>
<div class="vl" style="left:432px"></div>
<div class="vl" style="left:508px;top:77px;height:692px"></div>
<div class="vl" style="left:511px;top:77px;height:3px;background:#f2f2f2"></div>
<div class="vl" style="left:581px"></div>
<div class="vl" style="left:652px"></div>
<div class="vl" style="left:720px"></div>
<div class="vl" style="left:788px;top:77px;height:692px"></div>
<div class="vl" style="left:791px;top:77px;height:3px;background:#f2f2f2"></div>
<div class="vl" style="left:861px"></div>
<div style="position:absolute;left:0;top:368px;width:930px;height:26px;background:rgba(75,135,215,0.1)"></div>
<div style="position:absolute;left:791px;top:75px;width:1px;height:5px;background:#f2f2f2"></div>
<svg style="position:absolute;left:821px;top:376px" width="14" height="21" viewBox="0 0 14 21"><path d="M1.5 1.5 L1.5 17.2 L5.0 14.1 L8.1 19.5 L10.4 18.4 L7.9 12.7 L12.5 12.7 Z" fill="#fff" stroke="#222" stroke-width="1.1" stroke-linejoin="round"/></svg>
</body></html>
